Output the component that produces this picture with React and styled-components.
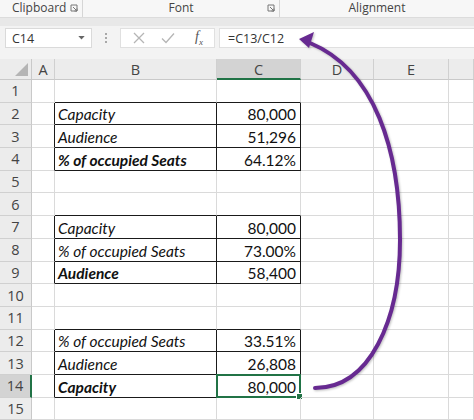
import React from "react";
import styled, { createGlobalStyle, css } from "styled-components";

const GlobalStyle = createGlobalStyle`
  html, body { margin: 0; padding: 0; background: #ffffff; }
  body { font-family: "Lato", "Noto Sans", sans-serif; }
`;

const Page = styled.div`
  position: relative;
  width: 474px;
  height: 420px;
  overflow: hidden;
  background: #f3f3f3;
`;

const Ribbon = styled.div`
  display: flex;
  height: 17px;
  background: #f7f7f7;
  border-bottom: 1px solid #dcdcdc;
  font-family: "Open Sans", "Noto Sans", sans-serif;
  font-size: 12px;
  color: #444;
`;

const Group = styled.div`
  position: relative;
  width: ${(p) => p.w}px;
  flex: ${(p) => (p.w ? "none" : "1")};
  display: flex;
  align-items: center;
  justify-content: ${(p) => (p.left ? "flex-start" : "center")};
  padding-left: ${(p) => (p.left ? "12px" : "0")};
  border-right: ${(p) => (p.w ? "1px solid #d6d6d6" : "none")};
  box-sizing: border-box;
  line-height: 1;
  padding-bottom: 2px;
`;

const Launcher = styled.svg`
  position: absolute;
  right: 3px;
  top: 4px;
`;

const RibbonBand = styled.div`
  height: 8px;
  background: #e8e8e8;
`;

const FormulaBar = styled.div`
  display: flex;
  align-items: center;
  height: 24px;
  padding: 0 0 0 5px;
  background: #f3f3f3;
`;

const NameBox = styled.div`
  width: 87px;
  height: 20px;
  box-sizing: border-box;
  background: #fff;
  border: 1px solid #dadada;
  display: flex;
  align-items: center;
  justify-content: space-between;
  padding: 0 6px 0 6px;
  font-family: "Open Sans", sans-serif;
  font-size: 12.5px;
  color: #333;
`;

const Dots = styled.div`
  width: 28px;
  display: flex;
  flex-direction: column;
  align-items: center;
  gap: 2px;
  & > span {
    width: 2px;
    height: 2px;
    background: #a8a8a8;
  }
`;

const IconBox = styled.div`
  width: 95px;
  height: 20px;
  box-sizing: border-box;
  background: #fff;
  border: 1px solid #e0e0e0;
  display: flex;
  align-items: center;
  padding: 0 0 0 12px;
  gap: 16px;
  color: #b8b8b8;
`;

const Fx = styled.span`
  margin-left: 4px;
  font-family: "Liberation Serif", serif;
  font-style: italic;
  font-size: 14px;
  color: #555;
`;

const Formula = styled.div`
  flex: 1;
  height: 20px;
  margin-left: 4px;
  box-sizing: border-box;
  background: #fff;
  border: 1px solid #e0e0e0;
  border-right: none;
  display: flex;
  align-items: center;
  padding-left: 8px;
  font-family: "Open Sans", sans-serif;
  font-size: 12.5px;
  color: #333;
`;

const Spacer = styled.div`
  height: 9px;
  background: #f3f3f3;
`;

const Sheet = styled.div`
  display: grid;
  grid-template-columns: 32px 23px 162px 84px 73px 75px 1fr;
  grid-template-rows: 21px repeat(15, 22.7px);
  background: #fff;
`;

const ColHead = styled.div`
  position: relative;
  display: flex;
  align-items: center;
  justify-content: center;
  box-sizing: border-box;
  background: ${(p) => (p.active ? "#d3d3d3" : "#ececec")};
  border-right: 1px solid #d0d0d0;
  border-bottom: ${(p) => (p.active ? "2px solid #217346" : "1px solid #c9c9c9")};
  font-family: "Open Sans", sans-serif;
  font-size: 14.5px;
  color: #444;
  padding-top: ${(p) => (p.active ? "1px" : "0")};
`;

const Corner = styled.div`
  position: relative;
  background: #ececec;
  border-right: 1px solid #c9c9c9;
  border-bottom: 1px solid #c9c9c9;
  box-sizing: border-box;
  &::after {
    content: "";
    position: absolute;
    right: 3px;
    bottom: 3px;
    width: 0;
    height: 0;
    border-left: 13px solid transparent;
    border-bottom: 13px solid #b5b5b5;
  }
`;

const RowHead = styled.div`
  display: flex;
  align-items: center;
  justify-content: center;
  box-sizing: border-box;
  background: ${(p) => (p.active ? "#d3d3d3" : "#ececec")};
  border-right: ${(p) => (p.active ? "2px solid #217346" : "1px solid #c9c9c9")};
  border-bottom: 1px solid #d0d0d0;
  font-family: "Open Sans", sans-serif;
  font-size: 14.5px;
  color: #444;
`;

const Cell = styled.div`
  position: relative;
  display: flex;
  align-items: flex-end;
  box-sizing: border-box;
  padding: 0 4px 1px 3px;
  border-right: 1px solid ${(p) => (p.br ? "#1a1a1a" : "#dadada")};
  border-bottom: 1px solid ${(p) => (p.bb ? "#1a1a1a" : "#dadada")};
  justify-content: ${(p) => (p.num ? "flex-end" : "flex-start")};
  font-size: 15.5px;
  color: #111;
  white-space: nowrap;
  ${(p) => p.italic && css`font-style: italic;`}
  ${(p) => p.bold && css`font-weight: 700;`}
`;

const Selection = styled.div`
  position: absolute;
  left: -1px;
  top: -1px;
  right: -1px;
  bottom: -1px;
  border: 2px solid #217346;
  pointer-events: none;
  &::after {
    content: "";
    position: absolute;
    right: -4px;
    bottom: -4px;
    width: 5px;
    height: 5px;
    background: #217346;
    border: 1px solid #fff;
  }
`;

const Arrow = styled.svg`
  position: absolute;
  left: 0;
  top: 0;
  pointer-events: none;
  filter: drop-shadow(1px 1px 1px rgba(0, 0, 0, 0.25));
`;

const COLS = ["A", "B", "C", "D", "E", ""];

const tables = [
  [2, 4],
  [7, 9],
  [12, 14],
];

const data = {
  2: ["Capacity", "80,000", false],
  3: ["Audience", "51,296", false],
  4: ["% of occupied Seats", "64.12%", true],
  7: ["Capacity", "80,000", false],
  8: ["% of occupied Seats", "73.00%", false],
  9: ["Audience", "58,400", true],
  12: ["% of occupied Seats", "33.51%", false],
  13: ["Audience", "26,808", false],
  14: ["Capacity", "80,000", true],
};

const inTable = (r, c) =>
  (c === 1 || c === 2) && tables.some(([a, b]) => r >= a && r <= b);

function LauncherIcon() {
  return (
    <Launcher width="9" height="9" viewBox="0 0 9 9">
      <path d="M1 1h6v6H1z" fill="none" stroke="#777" strokeWidth="1" />
      <path d="M3 3l4 4M4.5 7H7V4.5" fill="none" stroke="#777" strokeWidth="1" />
    </Launcher>
  );
}

export default function App() {
  const rows = [];
  for (let r = 1; r <= 15; r++) {
    rows.push(
      <RowHead key={`h${r}`} active={r === 14}>
        {r}
      </RowHead>
    );
    for (let c = 0; c < 6; c++) {
      const d = data[r];
      const br = inTable(r, c) || inTable(r, c + 1);
      const bb = inTable(r, c) || inTable(r + 1, c);
      let text = null;
      let props = {};
      if (d && c === 1) {
        text = d[0];
        props = { italic: true, bold: d[2] };
      } else if (d && c === 2) {
        text = d[1];
        props = { num: true };
      }
      rows.push(
        <Cell key={`${r}-${c}`} br={br} bb={bb} {...props}>
          {text}
          {r === 14 && c === 2 && <Selection />}
        </Cell>
      );
    }
  }

  return (
    <Page>
      <GlobalStyle />
      <Ribbon>
        <Group w={83} left>
          Clipboard
          <LauncherIcon />
        </Group>
        <Group w={197}>
          Font
          <LauncherIcon />
        </Group>
        <Group>Alignment</Group>
      </Ribbon>
      <RibbonBand />
      <FormulaBar>
        <NameBox>
          C14
          <svg width="7" height="4" viewBox="0 0 8 5">
            <path d="M0 0h8L4 4.5z" fill="#666" />
          </svg>
        </NameBox>
        <Dots>
          <span />
          <span />
          <span />
        </Dots>
        <IconBox>
          <svg width="12" height="12" viewBox="0 0 12 12">
            <path d="M1 1l10 10M11 1L1 11" stroke="#b5b5b5" strokeWidth="1.3" />
          </svg>
          <svg width="14" height="12" viewBox="0 0 14 12">
            <path d="M1 6.5l4 4L13 1.5" fill="none" stroke="#b5b5b5" strokeWidth="1.3" />
          </svg>
          <Fx>
            f<sub style={{ fontSize: 9 }}>x</sub>
          </Fx>
        </IconBox>
        <Formula>=C13/C12</Formula>
      </FormulaBar>
      <Spacer />
      <Sheet>
        <Corner />
        {COLS.map((l, i) => (
          <ColHead key={i} active={l === "C"}>
            {l}
          </ColHead>
        ))}
        {rows}
      </Sheet>
      <Arrow width="474" height="420" viewBox="0 0 474 420">
        <path
          d="M315 388 C370 388, 400 320, 400 240 C400 150, 375 70, 310 43"
          fill="none"
          stroke="#672a91"
          strokeWidth="4"
          strokeLinecap="round"
        />
        <path d="M299 39 L314 32 L309 48 Z" fill="#672a91" />
      </Arrow>
    </Page>
  );
}
